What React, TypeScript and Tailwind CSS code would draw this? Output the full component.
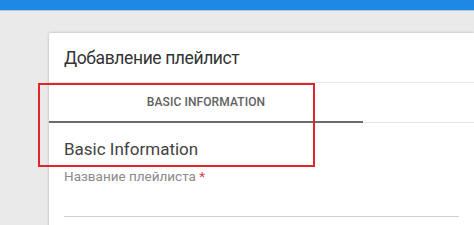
import React from 'react';

const App: React.FC = () => {
  return (
    <div
      className="relative w-[474px] h-[225px] overflow-hidden bg-[#ebeaea]"
      style={{ fontFamily: 'Roboto, "Noto Sans", sans-serif' }}
    >
      {/* app bar */}
      <div className="h-[10px] bg-[#1e88e5]" />
      <div className="h-[1px] bg-[#a9cdf0]" />

      <div className="pl-[49px] pt-[22px]">
        <div className="bg-white shadow-[0_0_3px_rgba(0,0,0,0.25)] rounded-tl-[2px]">
          <div className="h-[50px] px-[15px] pt-[2px] flex items-center text-[17.5px] tracking-[-0.4px] text-[#333] border-b border-[#e8e8e8]">
            Добавление плейлист
          </div>

          <div className="flex border-b border-[#e4e4e4]">
            <div className="w-[314px] h-[40px] -mb-px flex items-center justify-center text-[12px] font-medium text-[#616161] border-b-2 border-[#6b6b6b] tracking-[0.1px]">
              BASIC INFORMATION
            </div>
          </div>

          <div className="px-[15px]">
            <h2 className="pt-[14px] text-[17px] leading-[24px] text-[#424242]">Basic Information</h2>
            <label className="block mt-[6px] text-[13.5px] leading-[18px] text-[#8a8a8a]">
              Название плейлиста <span className="text-[#e53935]">*</span>
            </label>
            <div className="mt-[31px] h-[1px] bg-[#cfcfcf]" />
            <div className="h-[20px]" />
          </div>
        </div>
      </div>

      {/* red annotation box */}
      <div className="absolute left-[38px] top-[83px] w-[277px] h-[84px] border-2 border-[#e3242b]" />
    </div>
  );
};

export default App;
